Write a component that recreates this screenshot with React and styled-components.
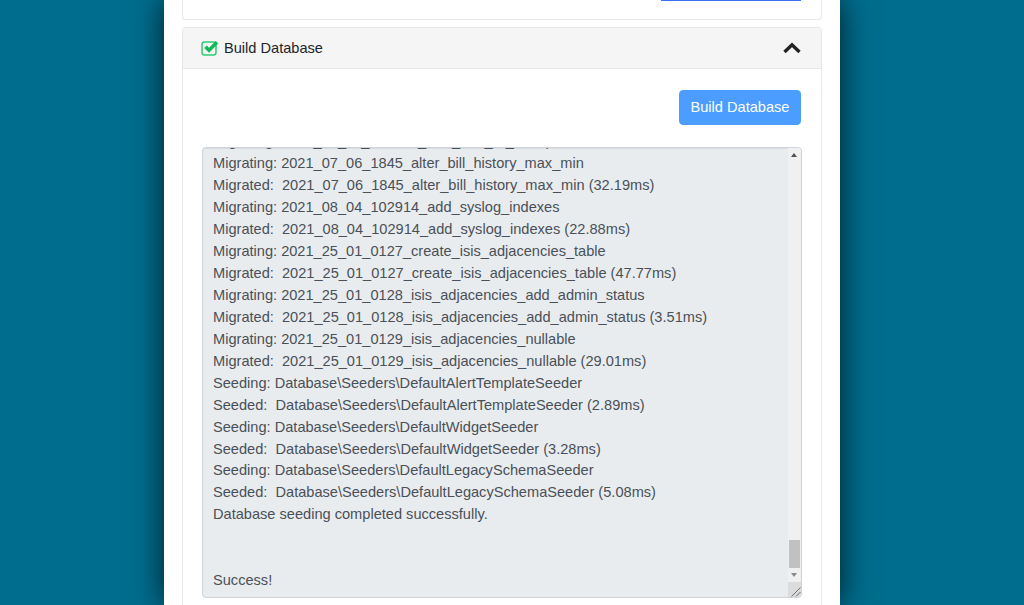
import React, { useEffect, useRef } from "react";
import styled, { createGlobalStyle } from "styled-components";

const LOG = `Migrating: 2021_06_11_084830_slas_add_rtt_stamp
Migrating: 2021_07_06_1845_alter_bill_history_max_min
Migrated:  2021_07_06_1845_alter_bill_history_max_min (32.19ms)
Migrating: 2021_08_04_102914_add_syslog_indexes
Migrated:  2021_08_04_102914_add_syslog_indexes (22.88ms)
Migrating: 2021_25_01_0127_create_isis_adjacencies_table
Migrated:  2021_25_01_0127_create_isis_adjacencies_table (47.77ms)
Migrating: 2021_25_01_0128_isis_adjacencies_add_admin_status
Migrated:  2021_25_01_0128_isis_adjacencies_add_admin_status (3.51ms)
Migrating: 2021_25_01_0129_isis_adjacencies_nullable
Migrated:  2021_25_01_0129_isis_adjacencies_nullable (29.01ms)
Seeding: Database\\Seeders\\DefaultAlertTemplateSeeder
Seeded:  Database\\Seeders\\DefaultAlertTemplateSeeder (2.89ms)
Seeding: Database\\Seeders\\DefaultWidgetSeeder
Seeded:  Database\\Seeders\\DefaultWidgetSeeder (3.28ms)
Seeding: Database\\Seeders\\DefaultLegacySchemaSeeder
Seeded:  Database\\Seeders\\DefaultLegacySchemaSeeder (5.08ms)
Database seeding completed successfully.


Success!`;

const EARLIER = Array.from({ length: 60 }, () => "Migrating: 2021_00_00_0000_earlier_migration").join("\n");

const GlobalStyle = createGlobalStyle`
  html, body {
    margin: 0;
    height: 605px;
    overflow: hidden;
    background: #006d8e;
    font-family: "Liberation Sans", Arial, sans-serif;
    font-size: 14.6px;
    color: #212529;
  }
`;

const Page = styled.div`
  display: flex;
  height: 605px;
  padding-left: 164px;
  overflow: hidden;
`;

const Container = styled.div`
  width: 640px;
  padding: 0 18px;
  background: #fff;
  box-shadow: 0 0 30px rgba(0, 0, 0, 0.75);
  display: flex;
  flex-direction: column;
  gap: 7px;
`;

const TopPanel = styled.div`
  flex: none;
  height: 20px;
  box-sizing: border-box;
  display: flex;
  justify-content: flex-end;
  align-items: flex-start;
  padding-right: 20px;
  background: #fff;
  border: 1px solid #e7e7e7;
  border-top: 0;
  border-radius: 0 0 4px 4px;
`;

const ButtonEdge = styled.div`
  width: 140px;
  height: 1px;
  background: #3b6ff0;
`;

const Panel = styled.div`
  flex: 1;
  background: #fff;
  border: 1px solid #e7e7e7;
  border-bottom: 0;
  border-radius: 4px 4px 0 0;
`;

const PanelHeading = styled.div`
  height: 41px;
  box-sizing: border-box;
  display: flex;
  align-items: center;
  justify-content: space-between;
  padding: 0 20px 0 18px;
  background: #f5f5f5;
  border-bottom: 1px solid #e7e7e7;
`;

const PanelTitle = styled.div`
  display: flex;
  align-items: center;
  gap: 5px;
`;

const PanelBody = styled.div`
  display: flex;
  flex-direction: column;
  padding: 21px 19.5px 0 18.5px;
`;

const BuildButton = styled.button`
  align-self: flex-end;
  width: 122px;
  height: 35px;
  margin-right: 0.5px;
  padding: 0 0 1px;
  border: 1px solid #4b9dff;
  border-radius: 4px;
  background: #4b9dff;
  color: #fff;
  font: inherit;
`;

const LogBox = styled.div`
  position: relative;
  margin-top: 22px;
  height: 451px;
`;

const LogOutput = styled.textarea`
  display: block;
  box-sizing: border-box;
  width: 100%;
  height: 100%;
  padding: 6px 11px 5px 10.5px;
  border: 1px solid #ced4da;
  border-radius: 4px;
  background: #e9ecef;
  color: #495057;
  font: 14.6px/21.95px "Liberation Sans", Arial, sans-serif;
  white-space: pre;
  resize: none;
  box-shadow: inset 0 1px 1px rgba(0, 0, 0, 0.075);
  outline: none;
`;

const ScrollRail = styled.div`
  position: absolute;
  top: 1px;
  right: 1px;
  bottom: 1px;
  width: 13px;
  display: flex;
  flex-direction: column;
  align-items: center;
  background: #f0f0f0;
  border-radius: 0 3px 3px 0;
`;

const ScrollArrow = styled.div`
  flex: none;
  width: 0;
  height: 0;
  margin-top: ${(props) => props.$gap}px;
  border-left: 3.5px solid transparent;
  border-right: 3.5px solid transparent;
  ${(props) =>
    props.$down
      ? "border-top: 4px solid #8a8a8a;"
      : "border-bottom: 4px solid #505050;"}
`;

const ScrollThumb = styled.div`
  flex: none;
  width: 11px;
  height: 28px;
  margin-top: auto;
  background: #c1c1c1;
`;

const ResizeCorner = styled.div`
  flex: none;
  align-self: stretch;
  height: 15px;
  margin-top: 5px;
  background: #dcdcdc;
  display: flex;
  align-items: flex-end;
  justify-content: flex-end;
  border-radius: 0 0 3px 0;
`;

const CheckIcon = () => (
  <svg width="18" height="16" viewBox="0 0 18 16" aria-hidden="true">
    <rect x="1" y="2" width="14" height="13" rx="2.5" fill="none" stroke="#2ecc71" strokeWidth="1.5" />
    <path d="M4.5 6.8 L8 10.3 L16 2.3" fill="none" stroke="#0fb857" strokeWidth="3.4" />
  </svg>
);

const ChevronUp = () => (
  <svg width="18" height="12" viewBox="0 0 18 12" aria-hidden="true">
    <path d="M1.5 10 L9 2.8 L16.5 10" fill="none" stroke="#222" strokeWidth="3.4" />
  </svg>
);

const ResizeGrip = () => (
  <svg width="11" height="11" viewBox="0 0 11 11" aria-hidden="true">
    <path d="M1.5 10.5 L10.5 1.5 M6 10.5 L10.5 6" fill="none" stroke="#6f6f6f" strokeWidth="1" />
  </svg>
);

export default function App() {
  const logRef = useRef(null);

  useEffect(() => {
    logRef.current.scrollTop = logRef.current.scrollHeight;
  }, []);

  return (
    <Page>
      <GlobalStyle />
      <Container>
        <TopPanel>
          <ButtonEdge />
        </TopPanel>
        <Panel>
          <PanelHeading>
            <PanelTitle>
              <CheckIcon />
              Build Database
            </PanelTitle>
            <ChevronUp />
          </PanelHeading>
          <PanelBody>
            <BuildButton>Build Database</BuildButton>
            <LogBox>
              <LogOutput ref={logRef} readOnly value={`${EARLIER}\n${LOG}`} />
              <ScrollRail>
                <ScrollArrow $gap={5} />
                <ScrollThumb />
                <ScrollArrow $down $gap={5} />
                <ResizeCorner>
                  <ResizeGrip />
                </ResizeCorner>
              </ScrollRail>
            </LogBox>
          </PanelBody>
        </Panel>
      </Container>
    </Page>
  );
}
